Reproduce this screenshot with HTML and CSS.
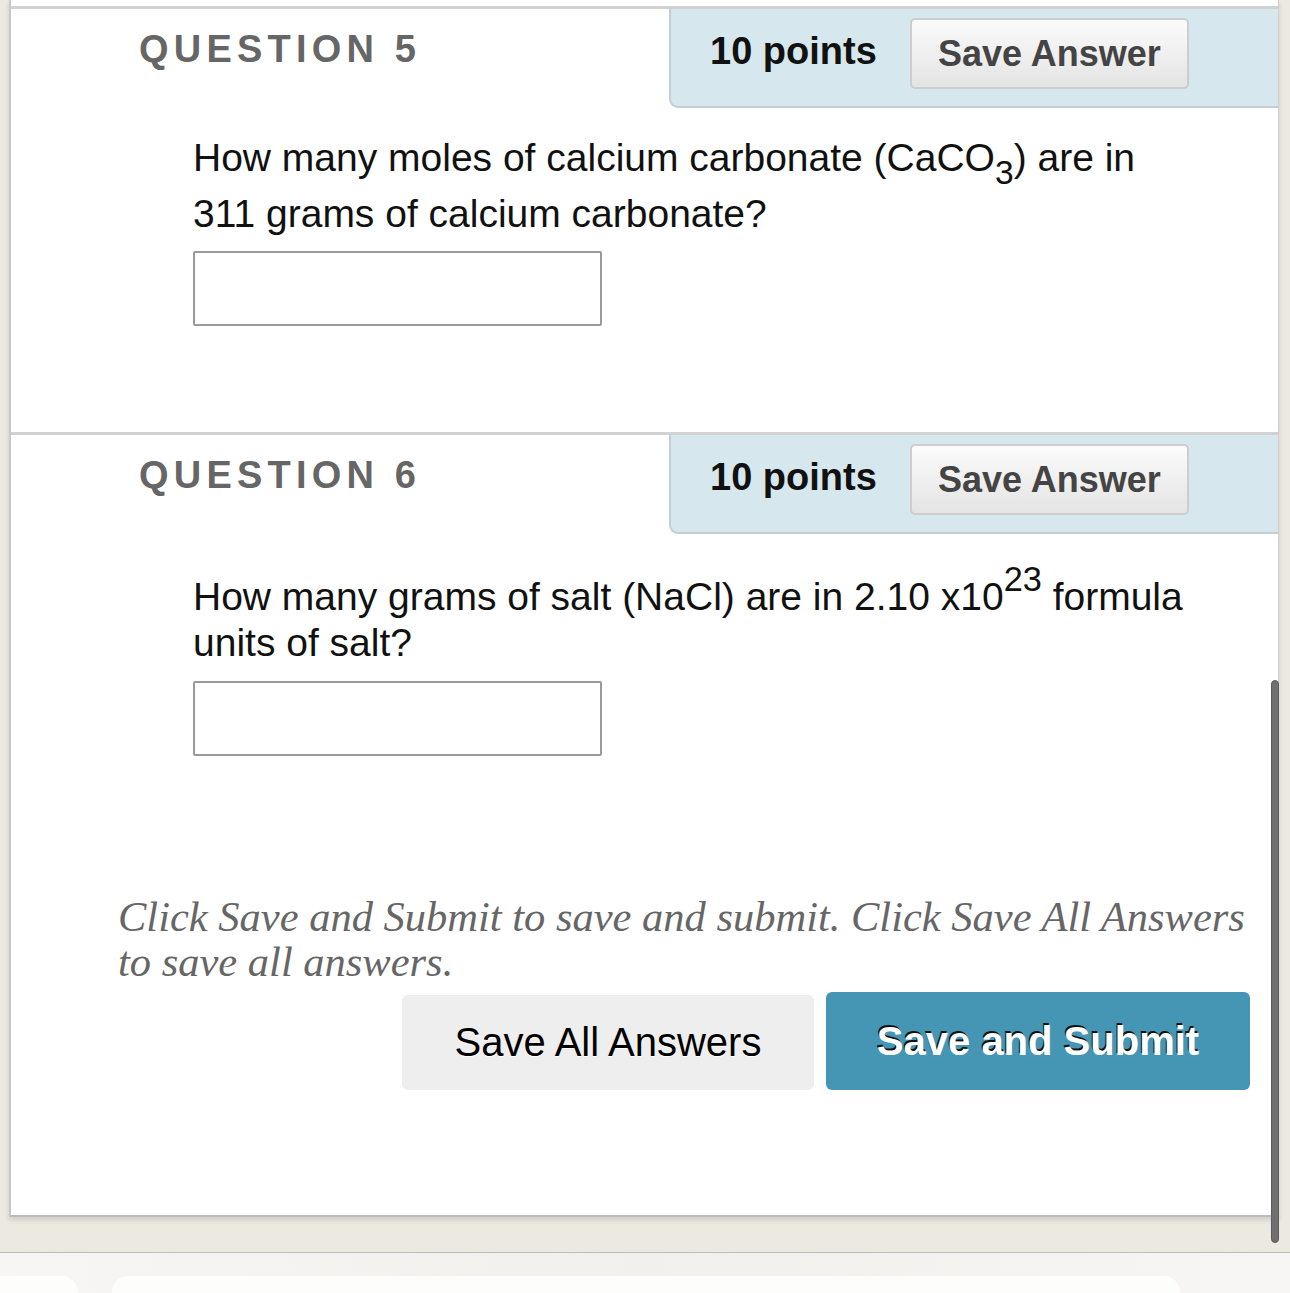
FILE: index.html
```html
<!DOCTYPE html>
<html>
<head>
<meta charset="utf-8">
<link rel="stylesheet" href="styles.css">
</head>
<body>
<div class="page">
  <div class="sheet">
    <div class="top-gap"></div>
    <section class="question q5">
      <div class="q-head">
        <h2 class="q-title">QUESTION 5</h2>
        <div class="q-points">
          <span class="points">10 points</span>
          <button class="save-btn">Save Answer</button>
        </div>
      </div>
      <div class="q-body">
        <p class="q-text">How many moles of calcium carbonate (CaCO<sub>3</sub>) are in 311 grams of calcium carbonate?</p>
        <div class="answer-box"></div>
      </div>
    </section>
    <section class="question q6">
      <div class="q-head">
        <h2 class="q-title">QUESTION 6</h2>
        <div class="q-points">
          <span class="points">10 points</span>
          <button class="save-btn">Save Answer</button>
        </div>
      </div>
      <div class="q-body">
        <p class="q-text">How many grams of salt (NaCl) are in 2.10 x10<sup>23</sup> formula units of salt?</p>
        <div class="answer-box"></div>
      </div>
    </section>
    <div class="footer">
      <p class="hint">Click Save and Submit to save and submit. Click Save All Answers to save all answers.</p>
      <div class="actions">
        <button class="btn-all">Save All Answers</button>
        <button class="btn-submit">Save and Submit</button>
      </div>
    </div>
  </div>
  <div class="scrollbar"></div>
  <div class="chrome">
    <div class="tab tab-a"></div>
    <div class="tab tab-b"></div>
  </div>
</div>
</body>
</html>
```
FILE: styles.css
```css
* { box-sizing: border-box; }
html, body { margin: 0; padding: 0; }
body {
  background: #ebe9e0;
  font-family: "Liberation Sans", Arial, sans-serif;
  width: 1290px;
  height: 1293px;
  overflow: hidden;
}
.page { position: relative; height: 1293px; }
.sheet {
  margin-left: 9px;
  width: 1270px;
  height: 1217px;
  background: #fff;
  border-left: 2px solid #c8c8c6;
  border-right: 1px solid #cfcfcf;
  border-bottom: 2px solid #bcbcbc;
  box-shadow: 0 3px 5px rgba(0,0,0,0.12);
}
.top-gap { height: 6px; }
.question { border-top: 3px solid #d2d2d2; }
.q5 { height: 426px; }
.q6 { height: 462px; }
.q-head {
  display: flex;
  justify-content: space-between;
  align-items: flex-start;
  height: 99px;
}
.q-title {
  margin: 0;
  padding: 20px 0 0 128px;
  font-size: 38px;
  font-weight: bold;
  letter-spacing: 5.2px;
  color: #666;
  line-height: 40px;
}
.q-points {
  width: 609px;
  height: 99px;
  background: #d6e8ee;
  border-left: 2px solid #c5ced2;
  border-bottom: 2px solid #c5ced2;
  border-bottom-left-radius: 9px;
  display: flex;
  align-items: flex-start;
  padding: 9px 0 0 39px;
}
.points {
  font-size: 38px;
  font-weight: bold;
  color: #111;
  margin-top: 15px;
  line-height: 36px;
}
.save-btn {
  margin-left: 33px;
  width: 279px;
  height: 71px;
  border: 2px solid #cdcdcd;
  border-radius: 5px;
  background: linear-gradient(#fbfbfb, #e4e4e4);
  font-family: "Liberation Sans", Arial, sans-serif;
  font-size: 36px;
  font-weight: bold;
  color: #444;
  padding: 0;
}
.q-body { padding-left: 182px; }
.q-text {
  margin: 0;
  font-size: 39px;
  line-height: 46px;
  color: #111;
  width: 1000px;
}
.q5 .q-text { padding-top: 22px; line-height: 56px; }
.q6 .q-text { padding-top: 40px; }
sub { font-size: 0.86em; vertical-align: -0.38em; line-height: 0; }
sup { font-size: 0.88em; vertical-align: 0.55em; line-height: 0; }
.answer-box {
  width: 409px;
  height: 75px;
  border: 2px solid #9a9a9a;
  border-radius: 2px;
}
.q5 .answer-box { margin-top: 9px; }
.q6 .answer-box { margin-top: 15px; }
.footer { padding: 0 28px 0 107px; }
.hint {
  margin: 0;
  font-family: "Liberation Serif", Georgia, serif;
  font-style: italic;
  font-size: 42.5px;
  line-height: 45px;
  color: #666;
}
.actions {
  display: flex;
  justify-content: flex-end;
  align-items: flex-start;
  gap: 12px;
  margin-top: 8px;
}
.btn-all {
  margin-top: 3px;
  width: 412px;
  height: 95px;
  border: 0;
  border-radius: 6px;
  background: #eeeeee;
  font-family: "Liberation Sans", Arial, sans-serif;
  font-size: 40px;
  color: #000;
  text-shadow: 0 1px 0 #fff;
}
.btn-submit {
  width: 424px;
  height: 98px;
  border: 0;
  border-radius: 6px;
  background: #4596b4;
  font-family: "Liberation Sans", Arial, sans-serif;
  font-size: 40px;
  font-weight: bold;
  color: #fff;
  text-shadow: -1px -2px 0 #111;
}
.scrollbar {
  position: absolute;
  left: 1271px;
  top: 680px;
  width: 8px;
  height: 563px;
  background: #6f6f6f;
  border-radius: 4px;
  border: 1px solid #5a5a5a;
}
.chrome {
  position: absolute;
  left: 0;
  top: 1252px;
  width: 1290px;
  height: 41px;
  border-top: 1px solid #bcbcbc;
  background: linear-gradient(90deg, #f7f6f4, #f1f0ed 50%, #f7f6f4);
}
.tab {
  position: absolute;
  top: 23px;
  height: 30px;
  background: #fdfdfc;
  border-radius: 16px 16px 0 0;
}
.tab-a { left: -20px; width: 98px; }
.tab-b { left: 112px; width: 1068px; }
```
